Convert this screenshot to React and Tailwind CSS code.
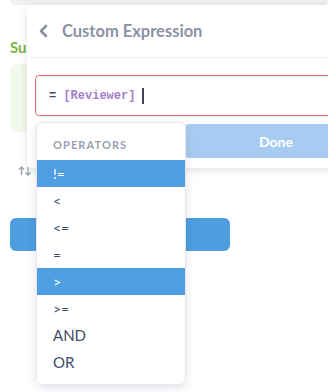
import React from "react";

const items = [
  { label: "!=", active: true },
  { label: "<" },
  { label: "<=" },
  { label: "=" },
  { label: ">", active: true },
  { label: ">=" },
  { label: "AND", word: true },
  { label: "OR", word: true },
];

export default function App() {
  return (
    <div
      className="relative w-[328px] h-[392px] overflow-hidden bg-white"
      style={{ fontFamily: "Lato, 'Open Sans', sans-serif" }}
    >
      {/* background page */}
      <div className="flex flex-col">
        <div className="ml-[10px] h-[5px] rounded-b-lg bg-[#eef0f3]" />
        <div className="ml-[10px] mt-[33px] h-[18px] text-[15px] font-bold leading-[18px] text-[#7cb342]">
          Summary
        </div>
        <div className="ml-[10px] mt-[8px] h-[68px] w-[300px] rounded-lg bg-[#f2f8ea]" />
        <div className="ml-[18px] mt-[33px] flex h-[12px] items-center text-[#9aa3ae]">
          <svg width="14" height="10" viewBox="0 0 14 10" fill="none" stroke="currentColor" strokeWidth="1.3">
            <path d="M3.5 9V1M1 3.5l2.5-2.5 2.5 2.5" />
            <path d="M10 1v8M7.5 6.5l2.5 2.5 2.5-2.5" />
          </svg>
        </div>
        <div className="ml-[10px] mt-[41px] h-[33px] w-[220px] rounded-md bg-[#4d9de0]" />
      </div>

      {/* popover */}
      <div className="absolute left-[27px] top-[5px] w-[347px] rounded-md bg-white shadow-[0_2px_10px_rgba(30,40,60,0.14)]">
        <div className="flex h-[53px] items-center gap-[13px] border-b border-[#eceef1] pl-[11px]">
          <svg width="11" height="14" viewBox="0 0 11 14" fill="none">
            <path d="M8 2L3 7l5 5" stroke="#8a90a2" strokeWidth="2.6" strokeLinecap="round" strokeLinejoin="round" />
          </svg>
          <span className="text-[16.5px] font-bold text-[#8c92a4]">Custom Expression</span>
        </div>
        <div className="px-[8px] pt-[17px] pb-[10px]">
          <div className="flex h-[41px] items-center rounded-[4px] border border-[#e07474] pl-[13px]">
            <span
              className="text-[12px] font-bold"
              style={{ fontFamily: "'Liberation Mono', 'DejaVu Sans Mono', monospace" }}
            >
              <span className="text-[#3f4a5e]">= </span>
              <span className="text-[#a47fcc]">[Reviewer]</span>
            </span>
            <span className="ml-[7px] h-[16px] w-[1.5px] bg-[#3c4456]" />
          </div>
          <div className="mt-[8px] flex justify-end">
            <div className="flex h-[34px] w-[180px] items-center justify-center rounded-[3px] bg-[#a6cdf1] text-[14px] font-bold text-white">
              Done
            </div>
          </div>
        </div>
      </div>

      {/* dropdown */}
      <div className="absolute left-[36px] top-[122px] w-[150px] rounded-[6px] border border-[#e8e6f2] bg-white pb-[8px] shadow-[0_3px_10px_rgba(40,40,80,0.12)]">
        <div className="flex h-[37px] items-end pb-[7px] pl-[16px] text-[11px] font-bold tracking-[0.1em] text-[#9a9fb0]">
          OPERATORS
        </div>
        {items.map((it, i) => (
          <div
            key={i}
            className={
              "flex h-[27px] items-center pl-[16px] " +
              (it.active ? "bg-[#509ee2] text-white" : "text-[#414b68]") +
              (it.word ? " text-[15px]" : " text-[14px]")
            }
          >
            {it.label}
          </div>
        ))}
      </div>
    </div>
  );
}
